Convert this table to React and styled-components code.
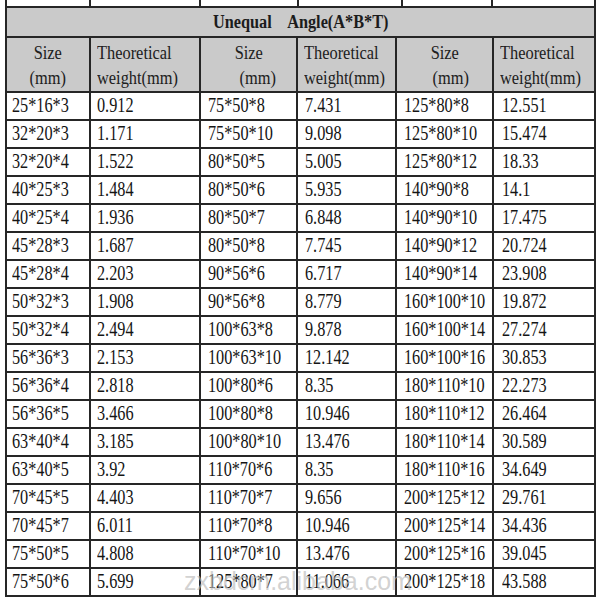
import React from "react";
import styled, { createGlobalStyle } from "styled-components";

const GlobalStyle = createGlobalStyle`
  html, body { margin: 0; padding: 0; background: #ffffff; }
  body { font-family: "Liberation Serif", "Times New Roman", serif; }
`;

const LINE = "#262626";
const GRAY = "#cacaca";

const Page = styled.div`
  position: relative;
  width: 600px;
  height: 600px;
  overflow: hidden;
  background: #fff;
`;

const TopStrip = styled.div`
  display: grid;
  grid-template-columns: 82px 108px 96px 102px 88px 101px;
  column-gap: 2px;
  padding: 0 2px;
  margin-left: 5px;
  width: 591px;
  height: 6px;
  box-sizing: border-box;
  background: ${LINE};
`;

const StripCell = styled.div`
  background: #fff;
`;

const Table = styled.div`
  display: grid;
  grid-template-columns: 82px 108px 95px 97px 95px 100px;
  grid-template-rows: 28px 53px repeat(18, 26px);
  gap: 2px;
  padding: 2px;
  margin-left: 5px;
  width: 591px;
  box-sizing: border-box;
  background: ${LINE};
`;

const TitleCell = styled.div`
  grid-column: 1 / -1;
  background: ${GRAY};
  display: flex;
  align-items: center;
  justify-content: center;
`;

const TitleText = styled.span`
  display: inline-block;
  white-space: pre;
  font-weight: bold;
  font-size: 18.5px;
  color: #1c1c1c;
  transform: scaleX(0.88);
  transform-origin: center;
`;

const HeadCell = styled.div`
  background: ${GRAY};
  display: flex;
  flex-direction: column;
  justify-content: center;
  align-items: ${(p) => (p.$center ? "center" : "flex-start")};
  padding-left: ${(p) => (p.$center ? "0" : "6px")};
  padding-top: 1px;
`;

const HeadLine = styled.span`
  display: inline-block;
  font-size: 19.5px;
  line-height: 25px;
  color: #202020;
  white-space: pre;
  transform: scaleX(0.84);
  transform-origin: ${(p) => (p.$center ? "center" : "left")};
  margin-left: ${(p) => p.$shift || 0}px;
`;

const Cell = styled.div`
  background: #fff;
  display: flex;
  align-items: center;
  padding-left: ${(p) => p.$pad || 6}px;
  overflow: hidden;
`;

const CellText = styled.span`
  display: inline-block;
  font-size: 21.5px;
  line-height: 1;
  color: #141414;
  white-space: pre;
  transform: scaleX(0.755);
  transform-origin: left center;
`;

const Watermark = styled.div`
  position: absolute;
  left: 184px;
  top: 569px;
  font-family: "Liberation Sans", Arial, sans-serif;
  font-size: 25px;
  line-height: 1;
  color: rgba(185, 185, 185, 0.65);
  pointer-events: none;
  white-space: nowrap;
`;

const rows = [
  ["25*16*3", "0.912", "75*50*8", "7.431", "125*80*8", "12.551"],
  ["32*20*3", "1.171", "75*50*10", "9.098", "125*80*10", "15.474"],
  ["32*20*4", "1.522", "80*50*5", "5.005", "125*80*12", "18.33"],
  ["40*25*3", "1.484", "80*50*6", "5.935", "140*90*8", "14.1"],
  ["40*25*4", "1.936", "80*50*7", "6.848", "140*90*10", "17.475"],
  ["45*28*3", "1.687", "80*50*8", "7.745", "140*90*12", "20.724"],
  ["45*28*4", "2.203", "90*56*6", "6.717", "140*90*14", "23.908"],
  ["50*32*3", "1.908", "90*56*8", "8.779", "160*100*10", "19.872"],
  ["50*32*4", "2.494", "100*63*8", "9.878", "160*100*14", "27.274"],
  ["56*36*3", "2.153", "100*63*10", "12.142", "160*100*16", "30.853"],
  ["56*36*4", "2.818", "100*80*6", "8.35", "180*110*10", "22.273"],
  ["56*36*5", "3.466", "100*80*8", "10.946", "180*110*12", "26.464"],
  ["63*40*4", "3.185", "100*80*10", "13.476", "180*110*14", "30.589"],
  ["63*40*5", "3.92", "110*70*6", "8.35", "180*110*16", "34.649"],
  ["70*45*5", "4.403", "110*70*7", "9.656", "200*125*12", "29.761"],
  ["70*45*7", "6.011", "110*70*8", "10.946", "200*125*14", "34.436"],
  ["75*50*5", "4.808", "110*70*10", "13.476", "200*125*16", "39.045"],
  ["75*50*6", "5.699", "125*80*7", "11.066", "200*125*18", "43.588"],
];

const pads = [5, 6, 7, 7, 7, 8];

function SizeHead({ shift }) {
  return (
    <HeadCell $center>
      <HeadLine $center>Size</HeadLine>
      <HeadLine $center $shift={shift}>(mm)</HeadLine>
    </HeadCell>
  );
}

function WeightHead() {
  return (
    <HeadCell>
      <HeadLine>Theoretical</HeadLine>
      <HeadLine>weight(mm)</HeadLine>
    </HeadCell>
  );
}

export default function App() {
  return (
    <>
      <GlobalStyle />
      <Page>
        <TopStrip>
          {Array.from({ length: 6 }).map((_, i) => (
            <StripCell key={i} />
          ))}
        </TopStrip>
        <Table>
          <TitleCell>
            <TitleText>{"Unequal    Angle(A*B*T)"}</TitleText>
          </TitleCell>
          <SizeHead shift={0} />
          <WeightHead />
          <SizeHead shift={18} />
          <WeightHead />
          <SizeHead shift={12} />
          <WeightHead />
          {rows.map((r, ri) =>
            r.map((v, ci) => (
              <Cell key={ri + "-" + ci} $pad={pads[ci]}>
                <CellText>{v}</CellText>
              </Cell>
            ))
          )}
        </Table>
        <Watermark>zxbdcm.alibaba.com</Watermark>
      </Page>
    </>
  );
}
